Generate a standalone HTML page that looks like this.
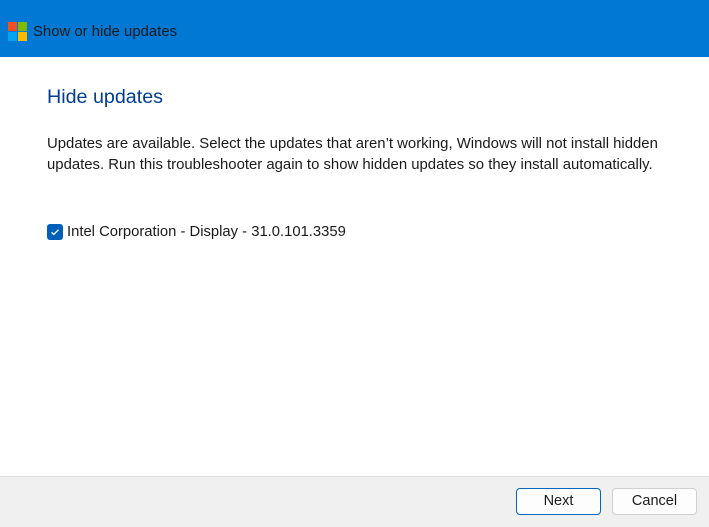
<!DOCTYPE html>
<html><head><meta charset="utf-8"><style>
*{margin:0;padding:0;box-sizing:border-box}
body{width:709px;height:527px;overflow:hidden;background:#fff;font-family:"Segoe UI","Liberation Sans",sans-serif;position:relative;color:#000}
.tb{position:absolute;left:0;top:0;width:709px;height:57px;background:#0078d4}
.logo{position:absolute;left:8px;top:22px;width:19px;height:19px}
.logo i{position:absolute;width:9px;height:9px}
.tt{position:absolute;left:33px;top:24px;font-size:14.9px;color:#1a1a1a}
h1{position:absolute;left:47px;top:86px;font-size:19.7px;font-weight:normal;color:#003e92}
.p{position:absolute;left:47px;top:134px;font-size:14.9px;line-height:21px;color:#1a1a1a;width:625px}
.cb{position:absolute;left:47px;top:224px;width:16px;height:16px;background:#005fb8;border-radius:3px}
.lb{position:absolute;left:67px;top:224px;font-size:14.8px;color:#1a1a1a}
.ft{position:absolute;left:0;top:476px;width:709px;height:51px;background:#f0f0f0;border-top:1px solid #dcdcdc}
.bt{position:absolute;top:488px;width:85px;height:27px;background:#fdfdfd;border:1px solid #d0d0d0;border-radius:4px;font-size:14.5px;text-align:center;line-height:25px;color:#1a1a1a}
</style></head><body>
<div class="tb">
<div class="logo"><i style="left:0;top:0;background:#f25022"></i><i style="left:10px;top:0;background:#7fba00"></i><i style="left:0;top:10px;background:#00a4ef"></i><i style="left:10px;top:10px;background:#ffb900"></i></div>
<div class="tt">Show or hide updates</div>
</div>
<h1>Hide updates</h1>
<div class="p">Updates are available. Select the updates that aren’t working, Windows will not install hidden updates. Run this troubleshooter again to show hidden updates so they install automatically.</div>
<div class="cb"><svg width="16" height="16" viewBox="0 0 16 16"><path d="M4.5 8.3l2.3 2.2 4.7-4.8" stroke="#fff" stroke-width="1.3" fill="none"/></svg></div>
<div class="lb">Intel Corporation - Display - 31.0.101.3359</div>
<div class="ft"></div>
<div class="bt" style="left:516px;border:1px solid #0067c0">Next</div>
<div class="bt" style="left:612px">Cancel</div>
</body></html>
